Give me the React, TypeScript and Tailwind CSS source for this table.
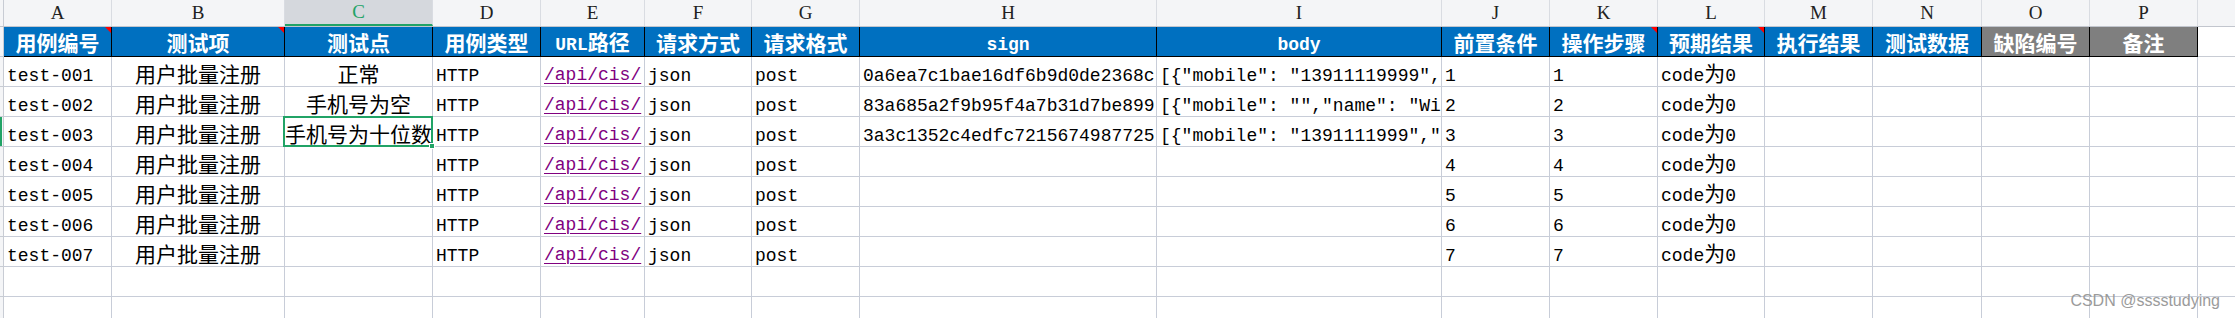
import React from 'react';

type Col = {
  letter: string;
  w: string;
  head: string;
  align: 'left' | 'center';
  gray?: boolean;
  mark?: boolean;
};

const cols: Col[] = [
  { letter: 'A', w: 'w-[108px]', head: '用例编号', align: 'left', mark: true },
  { letter: 'B', w: 'w-[173px]', head: '测试项', align: 'center', mark: true },
  { letter: 'C', w: 'w-[148px]', head: '测试点', align: 'center' },
  { letter: 'D', w: 'w-[108px]', head: '用例类型', align: 'left' },
  { letter: 'E', w: 'w-[104px]', head: 'URL路径', align: 'left' },
  { letter: 'F', w: 'w-[107px]', head: '请求方式', align: 'left' },
  { letter: 'G', w: 'w-[108px]', head: '请求格式', align: 'left' },
  { letter: 'H', w: 'w-[297px]', head: 'sign', align: 'left' },
  { letter: 'I', w: 'w-[285px]', head: 'body', align: 'left' },
  { letter: 'J', w: 'w-[108px]', head: '前置条件', align: 'left' },
  { letter: 'K', w: 'w-[108px]', head: '操作步骤', align: 'left', mark: true },
  { letter: 'L', w: 'w-[107px]', head: '预期结果', align: 'left', mark: true },
  { letter: 'M', w: 'w-[108px]', head: '执行结果', align: 'left' },
  { letter: 'N', w: 'w-[109px]', head: '测试数据', align: 'left' },
  { letter: 'O', w: 'w-[108px]', head: '缺陷编号', align: 'left', gray: true },
  { letter: 'P', w: 'w-[108px]', head: '备注', align: 'left', gray: true },
];

// only the part that fits in the cell is visible in the sheet
const url = '/api/cis/';

const rows: string[][] = [
  ['test-001', '用户批量注册', '正常', 'HTTP', url, 'json', 'post', '0a6ea7c1bae16df6b9d0de2368c', '[{"mobile": "13911119999",', '1', '1', 'code为0'],
  ['test-002', '用户批量注册', '手机号为空', 'HTTP', url, 'json', 'post', '83a685a2f9b95f4a7b31d7be899', '[{"mobile": "","name": "Wi', '2', '2', 'code为0'],
  ['test-003', '用户批量注册', '手机号为十位数', 'HTTP', url, 'json', 'post', '3a3c1352c4edfc7215674987725', '[{"mobile": "1391111999","', '3', '3', 'code为0'],
  ['test-004', '用户批量注册', '', 'HTTP', url, 'json', 'post', '', '', '4', '4', 'code为0'],
  ['test-005', '用户批量注册', '', 'HTTP', url, 'json', 'post', '', '', '5', '5', 'code为0'],
  ['test-006', '用户批量注册', '', 'HTTP', url, 'json', 'post', '', '', '6', '6', 'code为0'],
  ['test-007', '用户批量注册', '', 'HTTP', url, 'json', 'post', '', '', '7', '7', 'code为0'],
  [],
  [],
  [],
];

const CJK = /([\u3000-\u9fff\uff00-\uffef]+)/;

// SimSun-like mix: CJK wide, latin half width
const Txt: React.FC<{ s: string; bold?: boolean }> = ({ s, bold }) => (
  <span className="leading-[20px]">
    {s.split(CJK).filter(Boolean).map((part, i) =>
      CJK.test(part) ? (
        <span
          key={i}
          className={`font-['Noto_Sans_CJK_SC',sans-serif] text-[21px] leading-[20px] ${bold ? 'font-bold' : ''}`}
        >
          {part}
        </span>
      ) : (
        <span
          key={i}
          className={`font-['Liberation_Mono','Noto_Sans_CJK_SC',monospace] text-[18px] leading-[20px] ${bold ? 'font-bold' : ''}`}
        >
          {part}
        </span>
      )
    )}
  </span>
);

export default function App() {
  return (
    <div className="relative w-[2235px] h-[318px] overflow-hidden bg-white text-black">
      {/* column letters */}
      <div className="flex h-[27px] bg-[#f4f5f7] border-b border-[#c2c6ce]">
        <div className="w-[4px] shrink-0 border-r border-[#c8ccd4]" />
        {cols.map(c => (
          <div
            key={c.letter}
            className={`${c.w} shrink-0 flex items-center justify-center border-r border-[#d9dce2] font-['Liberation_Serif',serif] text-[19px] ${
              c.letter === 'C'
                ? 'bg-[#d5d8dd] text-[#21a366] border-b-2 border-b-[#21a366]'
                : 'text-[#222]'
            }`}
          >
            {c.letter}
          </div>
        ))}
        <div className="flex-1" />
      </div>

      {/* header row */}
      <div className="flex h-[30px]">
        <div className="w-[4px] shrink-0 bg-[#f4f5f7] border-r border-b border-[#c8ccd4]" />
        {cols.map(c => (
          <div
            key={c.letter}
            className={`${c.w} shrink-0 relative flex items-end justify-center pb-[1px] border-r border-b border-black text-white whitespace-nowrap ${
              c.gray ? 'bg-[#7f7f7f]' : 'bg-[#0070c0]'
            }`}
          >
            <Txt s={c.head} bold />
            {c.mark && (
              <div className="absolute top-0 right-0 w-0 h-0 border-l-[6px] border-l-transparent border-t-[6px] border-t-[#ff0000]" />
            )}
          </div>
        ))}
        <div className="flex-1 border-b border-[#c8ccd4]" />
      </div>

      {/* data rows */}
      {rows.map((r, ri) => (
        <div key={ri} className="flex h-[30px]">
          <div className="w-[4px] shrink-0 flex justify-start bg-[#f4f5f7] border-r border-b border-[#c8ccd4]">
            {ri === 2 && <div className="w-[2px] h-full bg-[#21a366]" />}
          </div>
          {cols.map((c, ci) => {
            const v = r[ci] || '';
            const selected = ri === 2 && c.letter === 'C';
            return (
              <div
                key={c.letter}
                className={`${c.w} shrink-0 relative flex items-end border-r border-b border-[#c8cdd8] whitespace-nowrap ${
                  c.align === 'center' ? 'justify-center' : 'justify-start pl-[3px]'
                }`}
              >
                {c.letter === 'E' && v ? (
                  <span className="text-[#800080] underline decoration-1 underline-offset-[3px]">
                    <Txt s={v} />
                  </span>
                ) : (
                  <Txt s={v} />
                )}
                {selected && (
                  <div className="absolute -left-[2px] -top-[1px] right-[-1px] bottom-[-1px] border-2 border-[#21a366] z-10 pointer-events-none">
                    <div className="absolute -right-[4px] -bottom-[4px] w-[6px] h-[6px] bg-[#21a366] border border-white" />
                  </div>
                )}
              </div>
            );
          })}
          <div className="flex-1 border-b border-[#c8cdd8]" />
        </div>
      ))}

      <div className="absolute right-[15px] bottom-[9px] font-['Liberation_Sans',sans-serif] text-[16px] text-[#9b9b9b] leading-none">
        CSDN @sssstudying
      </div>
    </div>
  );
}
